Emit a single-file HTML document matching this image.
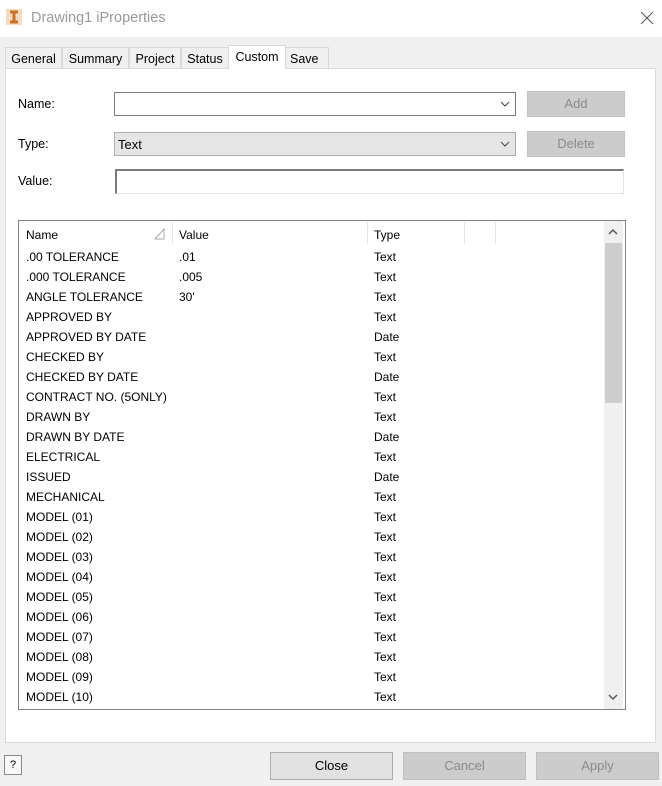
<html><head><style>
body{margin:0;width:662px;height:786px;background:#f0f0f0;font-family:"Liberation Sans",sans-serif;font-size:12px;color:#000;position:relative;overflow:hidden}
.a{position:absolute}
.btn{position:absolute;background:#cccccc;border:1px solid #bfbfbf;color:#8a8a8a;text-align:center;box-sizing:border-box;font-size:13px}
.tab{position:absolute;top:47px;height:21px;border:1px solid #d9d9d9;border-bottom:none;background:#f0f0f0;box-sizing:border-box;font-size:12.5px;padding:4px 0 0 0;text-align:center}
.row{position:absolute;left:26px;height:20px;line-height:20px;font-size:12px}
</style></head><body>
<div class="a" style="left:0;top:0;width:662px;height:37px;background:#fff"></div>
<svg class="a" style="left:6px;top:9px" width="16" height="16"><rect x="0" y="0" width="16" height="16" fill="#f5dcc0"/><path d="M4 3h8M4 13h8M8 3v10" stroke="#c8742a" stroke-width="3"/></svg>
<div class="a" style="left:31px;top:10px;font-size:14.5px;color:#999">Drawing1 iProperties</div>
<svg class="a" style="left:640px;top:11px" width="14" height="14"><path d="M1 1l12 12M13 1L1 13" stroke="#555" stroke-width="1"/></svg>
<div class="a" style="left:5px;top:68px;width:651px;height:675px;background:#fff;border:1px solid #d9d9d9;box-sizing:border-box"></div>
<div class="tab" style="left:5px;width:57px">General</div>
<div class="tab" style="left:62px;width:67px">Summary</div>
<div class="tab" style="left:129px;width:52px">Project</div>
<div class="tab" style="left:181px;width:48px">Status</div>
<div class="tab" style="left:228px;top:45px;height:24px;width:58px;background:#fff;padding-top:4px">Custom</div>
<div class="tab" style="left:285px;width:44px;text-align:left;padding-left:4px">Save</div>
<div class="a" style="left:18px;top:97px;font-size:12.5px">Name:</div>
<div class="a" style="left:18px;top:137px;font-size:12.5px">Type:</div>
<div class="a" style="left:18px;top:174px;font-size:12.5px">Value:</div>
<div class="a" style="left:114px;top:92px;width:402px;height:24px;border:1px solid #7a7a7a;box-sizing:border-box;background:#fff"></div>
<div class="a" style="left:114px;top:132px;width:402px;height:24px;border:1px solid #adadad;box-sizing:border-box;background:#e5e5e5;padding:4px 0 0 3px;font-size:13px">Text</div>
<svg class="a" style="left:500px;top:100px" width="10" height="8"><path d="M1 2l4 4 4-4" stroke="#444" fill="none"/></svg>
<svg class="a" style="left:500px;top:140px" width="10" height="8"><path d="M1 2l4 4 4-4" stroke="#444" fill="none"/></svg>
<div class="btn" style="left:527px;top:91px;width:98px;height:26px;line-height:24px">Add</div>
<div class="btn" style="left:527px;top:131px;width:98px;height:26px;line-height:24px">Delete</div>
<div class="a" style="left:115px;top:169px;width:509px;height:25px;border:1px solid #e3e3e3;border-top:2px solid #7a7a7a;border-left:2px solid #7a7a7a;box-sizing:border-box;background:#fff"></div>
<div class="a" style="left:18px;top:220px;width:608px;height:490px;border:1px solid #828282;box-sizing:border-box;background:#fff"></div>
<div class="a" style="left:172px;top:222px;width:1px;height:22px;background:#e5e5e5"></div>
<div class="a" style="left:367px;top:222px;width:1px;height:22px;background:#e5e5e5"></div>
<div class="a" style="left:464px;top:222px;width:1px;height:22px;background:#e5e5e5"></div>
<div class="a" style="left:495px;top:222px;width:1px;height:22px;background:#e5e5e5"></div>
<div class="a" style="left:26px;top:228px;font-size:12px">Name</div>
<div class="a" style="left:179px;top:228px;font-size:12px">Value</div>
<div class="a" style="left:374px;top:228px;font-size:12px">Type</div>
<svg class="a" style="left:154px;top:228px" width="12" height="12"><path d="M1 11L10 1v10z" stroke="#aaa" fill="none"/></svg>
<div class="a" style="left:604px;top:221px;width:19px;height:488px;background:#f0f0f0"></div>
<div class="a" style="left:605px;top:243px;width:17px;height:160px;background:#cdcdcd"></div>
<svg class="a" style="left:608px;top:228px" width="10" height="8"><path d="M1 6l4-4 4 4" stroke="#555" fill="none" stroke-width="1.5"/></svg>
<svg class="a" style="left:608px;top:693px" width="10" height="8"><path d="M1 2l4 4 4-4" stroke="#555" fill="none" stroke-width="1.5"/></svg>
<div id="rows"></div>
<script>
var d=[[".00 TOLERANCE",".01","Text"],[".000 TOLERANCE",".005","Text"],["ANGLE TOLERANCE","30'","Text"],["APPROVED BY","","Text"],["APPROVED BY DATE","","Date"],["CHECKED BY","","Text"],["CHECKED BY DATE","","Date"],["CONTRACT NO. (5ONLY)","","Text"],["DRAWN BY","","Text"],["DRAWN BY DATE","","Date"],["ELECTRICAL","","Text"],["ISSUED","","Date"],["MECHANICAL","","Text"]];
for(var i=1;i<=10;i++)d.push(["MODEL ("+(i<10?"0":"")+i+")","","Text"]);
var h="";d.forEach(function(r,i){var t=247+i*20;h+='<div class="row" style="top:'+t+'px">'+r[0]+'</div><div class="row" style="left:179px;top:'+t+'px">'+r[1]+'</div><div class="row" style="left:374px;top:'+t+'px">'+r[2]+'</div>';});
document.getElementById("rows").innerHTML=h;
</script>
<div class="a" style="left:4px;top:755px;width:18px;height:20px;border:1px solid #888;box-sizing:border-box;background:#f8f8f8;font-size:11px;text-align:center;line-height:18px">?</div>
<div class="btn" style="left:270px;top:752px;width:123px;height:28px;line-height:26px;background:#e1e1e1;border-color:#adadad;color:#000">Close</div>
<div class="btn" style="left:403px;top:752px;width:123px;height:28px;line-height:26px">Cancel</div>
<div class="btn" style="left:536px;top:752px;width:123px;height:28px;line-height:26px">Apply</div>
</body></html>
